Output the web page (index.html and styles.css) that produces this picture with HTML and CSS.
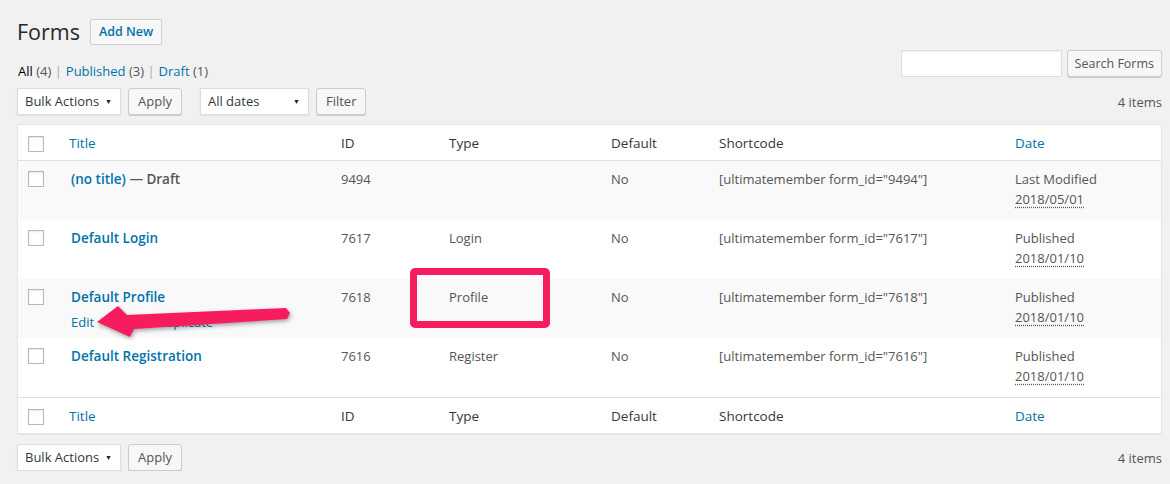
FILE: index.html
```html
<!DOCTYPE html>
<html lang="en">

<head>
    <meta charset="UTF-8">
    <title>Forms</title>
    <link rel="stylesheet" href="styles.css">
</head>

<body>

    <div class="wrap">

        <div class="title-row">
            <h1>Forms</h1>
            <a class="page-action" href="#">Add New</a>
        </div>

        <div class="filter-row">
            <ul class="subsubsub">
                <li><a class="current" href="#">All <span class="count">(4)</span></a> |</li>
                <li><a href="#">Published <span class="count">(3)</span></a> |</li>
                <li><a href="#">Draft <span class="count">(1)</span></a></li>
            </ul>
            <div class="search-box">
                <span class="search-input"></span>
                <button type="button" class="button">Search Forms</button>
            </div>
        </div>

        <div class="tablenav">
            <div class="actions">
                <div class="select bulk">Bulk Actions <span class="caret">&#9660;</span></div>
                <button type="button" class="button">Apply</button>
                <div class="select dates">All dates <span class="caret">&#9660;</span></div>
                <button type="button" class="button">Filter</button>
            </div>
            <div class="displaying-num">4 items</div>
        </div>

        <table class="forms-table">
            <colgroup>
                <col style="width: 41px">
                <col style="width: 272px">
                <col style="width: 108px">
                <col style="width: 162px">
                <col style="width: 108px">
                <col style="width: 296px">
                <col style="width: 156px">
            </colgroup>
            <thead>
                <tr>
                    <th class="check-column"><span class="cb"></span></th>
                    <th class="sortable">Title</th>
                    <th>ID</th>
                    <th>Type</th>
                    <th>Default</th>
                    <th>Shortcode</th>
                    <th class="sortable">Date</th>
                </tr>
            </thead>
            <tbody>
                <tr class="alt">
                    <td class="check-column"><span class="cb"></span></td>
                    <td class="title-cell"><a class="row-title" href="#">(no title)</a> <strong class="state">&mdash; Draft</strong></td>
                    <td>9494</td>
                    <td></td>
                    <td>No</td>
                    <td>[ultimatemember form_id="9494"]</td>
                    <td>Last Modified<br><abbr>2018/05/01</abbr></td>
                </tr>
                <tr>
                    <td class="check-column"><span class="cb"></span></td>
                    <td class="title-cell"><a class="row-title" href="#">Default Login</a></td>
                    <td>7617</td>
                    <td>Login</td>
                    <td>No</td>
                    <td>[ultimatemember form_id="7617"]</td>
                    <td>Published<br><abbr>2018/01/10</abbr></td>
                </tr>
                <tr class="alt">
                    <td class="check-column"><span class="cb"></span></td>
                    <td class="title-cell">
                        <a class="row-title" href="#">Default Profile</a>
                        <div class="row-actions"><a href="#">Edit</a> <span class="sep">|</span> <a href="#">Trash</a> <span class="sep">|</span> <a href="#">Duplicate</a></div>
                    </td>
                    <td>7618</td>
                    <td>Profile</td>
                    <td>No</td>
                    <td>[ultimatemember form_id="7618"]</td>
                    <td>Published<br><abbr>2018/01/10</abbr></td>
                </tr>
                <tr>
                    <td class="check-column"><span class="cb"></span></td>
                    <td class="title-cell"><a class="row-title" href="#">Default Registration</a></td>
                    <td>7616</td>
                    <td>Register</td>
                    <td>No</td>
                    <td>[ultimatemember form_id="7616"]</td>
                    <td>Published<br><abbr>2018/01/10</abbr></td>
                </tr>
            </tbody>
            <tfoot>
                <tr>
                    <th class="check-column"><span class="cb"></span></th>
                    <th class="sortable">Title</th>
                    <th>ID</th>
                    <th>Type</th>
                    <th>Default</th>
                    <th>Shortcode</th>
                    <th class="sortable">Date</th>
                </tr>
            </tfoot>
        </table>

        <div class="tablenav bottom">
            <div class="actions">
                <div class="select bulk">Bulk Actions <span class="caret">&#9660;</span></div>
                <button type="button" class="button">Apply</button>
            </div>
            <div class="displaying-num">4 items</div>
        </div>

    </div>

    <!-- annotation marks drawn over the screenshot -->
    <div class="mark-box"></div>
    <svg class="mark-arrow" width="1170" height="484" viewBox="0 0 1170 484">
        <polygon points="97,322 118,306 127,315 286,308 290,313 287,319 134,329 130,337" fill="#f71c5d" />
    </svg>

</body>

</html>
```

FILE: styles.css
```css
body {
    margin: 0;
    background: #f1f1f1;
    color: #444;
    font-family: "Open Sans", Arial, sans-serif;
    font-size: 13px;
    line-height: 20px;
    position: relative;
}

a {
    color: #0073aa;
    text-decoration: none;
}

.wrap {
    padding: 18px 8px 0 17px;
}

.title-row {
    display: flex;
    align-items: center;
    height: 28px;
}

.title-row h1 {
    margin: 0;
    font-size: 21.5px;
    font-weight: 400;
    color: #23282d;
    line-height: 28px;
}

.page-action {
    margin-left: 10px;
    height: 26px;
    box-sizing: border-box;
    padding: 0 8px;
    line-height: 24px;
    border: 1px solid #ccc;
    border-radius: 2px;
    background: #f7f7f7;
    font-weight: 600;
    font-size: 12.5px;
}

.filter-row {
    display: flex;
    justify-content: space-between;
    height: 32px;
}

.subsubsub {
    list-style: none;
    margin: 15px 0 0 1px;
    padding: 0;
    display: flex;
    gap: 4px;
    color: #aaa;
}

.subsubsub .count {
    color: #555;
}

.subsubsub .current {
    color: #000;
}

.search-box {
    display: flex;
    gap: 5px;
    margin-top: 4px;
}

.search-input {
    width: 161px;
    height: 27px;
    box-sizing: border-box;
    border: 1px solid #ddd;
    background: #fff;
    box-shadow: inset 0 1px 2px rgba(0, 0, 0, .07);
}

.button {
    height: 27px;
    box-sizing: border-box;
    padding: 0 9px;
    border: 1px solid #ccc;
    border-radius: 3px;
    background: #f7f7f7;
    box-shadow: 0 1px 0 #ccc;
    color: #555;
    font-family: inherit;
    font-size: 13px;
    line-height: 25px;
}

.search-box .button {
    padding: 0 7px;
    font-size: 12.5px;
}

.tablenav {
    display: flex;
    justify-content: space-between;
    align-items: center;
    height: 27px;
    margin-top: 10px;
}

.actions {
    display: flex;
    align-items: center;
    gap: 7px;
}

.select {
    height: 27px;
    box-sizing: border-box;
    border: 1px solid #ddd;
    background: #fff;
    box-shadow: 0 1px 2px rgba(0, 0, 0, .07);
    padding: 0 8px 0 7px;
    line-height: 25px;
    font-size: 13px;
    color: #32373c;
    display: flex;
    justify-content: space-between;
    align-items: center;
}

.select .caret {
    font-size: 7px;
    color: #222;
}

.select.bulk {
    width: 104px;
}

.select.dates {
    width: 109px;
    margin-left: 11px;
}

.displaying-num {
    color: #555;
}

.forms-table {
    width: 1145px;
    margin-top: 9px;
    table-layout: fixed;
    border-spacing: 0;
    background: #fff;
    border: 1px solid #e5e5e5;
    box-shadow: 0 1px 1px rgba(0, 0, 0, .04);

    th {
        text-align: left;
        font-weight: 400;
        font-size: 13.5px;
        color: #32373c;
        padding: 8px 10px 7px;
        line-height: 20px;
    }

    thead th {
        border-bottom: 1px solid #e1e1e1;
    }

    tfoot th {
        border-top: 1px solid #e1e1e1;
    }

    th.sortable {
        color: #0073aa;
    }

    tbody tr {
        height: 59px;
    }

    tbody tr.alt {
        background: #f9f9f9;
    }

    td {
        vertical-align: top;
        padding: 8px 10px 0;
        color: #555;
        line-height: 20px;
    }

    .check-column {
        padding-left: 10px;
        padding-right: 0;
    }

    .title-cell {
        padding-left: 12px;
        font-size: 13.5px;
    }

    abbr {
        text-decoration: underline dotted;
        text-underline-offset: 3px;
    }
}

.cb {
    display: block;
    width: 16px;
    height: 16px;
    box-sizing: border-box;
    margin-top: 2px;
    border: 1px solid #b4b9be;
    background: #fff;
    box-shadow: inset 0 1px 2px rgba(0, 0, 0, .1);
}

.row-title {
    font-weight: 600;
}

.state {
    font-weight: 600;
    color: #555;
}

.row-actions {
    margin-top: 5px;
    font-size: 13px;
}

.row-actions .sep {
    color: #ddd;
}

.mark-box {
    position: absolute;
    left: 410px;
    top: 268px;
    width: 140px;
    height: 60px;
    box-sizing: border-box;
    border: 7px solid #f71c5d;
    border-radius: 5px;
}

.mark-arrow {
    position: absolute;
    left: 0;
    top: 0;
    filter: drop-shadow(1px 2px 2px rgba(0, 0, 0, .35));
}
```
